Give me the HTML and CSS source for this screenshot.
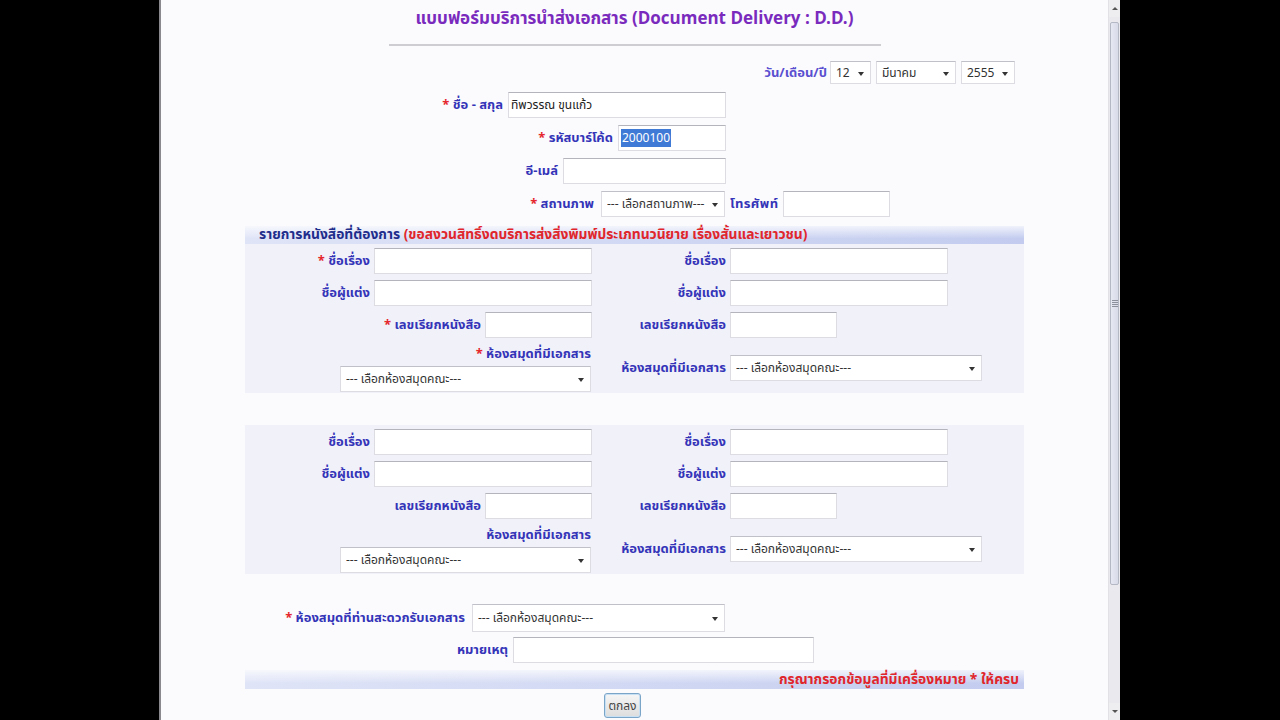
FILE: index.html
```html
<!DOCTYPE html>
<html lang="th">
<head>
<meta charset="utf-8">
<title>แบบฟอร์มบริการนำส่งเอกสาร</title>
<link rel="stylesheet" href="styles.css">
</head>
<body>
<div class="bar-left"></div>
<div class="viewport">
  <div class="page">
    <h1 class="title">แบบฟอร์มบริการนำส่งเอกสาร (Document Delivery : D.D.)</h1>
    <div class="rule"></div>
    <div class="form">
      <div class="date-row">
        <span class="date-label">วัน/เดือน/ปี</span>
        <span class="sel w-day"><select><option>12</option></select></span>
        <span class="sel w-month"><select><option>มีนาคม</option></select></span>
        <span class="sel w-year"><select><option>2555</option></select></span>
      </div>

      <div class="top-row">
        <div class="cell-r"><span class="lbl"><span class="req">*</span> ชื่อ - สกุล</span><span class="input w-name">ทิพวรรณ ขุนแก้ว</span></div>
        <div class="cell-l"></div>
      </div>
      <div class="top-row">
        <div class="cell-r"><span class="lbl"><span class="req">*</span> รหัสบาร์โค้ด</span><span class="input w-code"><span class="hl">2000100</span></span></div>
        <div class="cell-l"></div>
      </div>
      <div class="top-row">
        <div class="cell-r"><span class="lbl">อี-เมล์</span><span class="input w-mail"></span></div>
        <div class="cell-l"></div>
      </div>
      <div class="top-row">
        <div class="cell-r"><span class="lbl"><span class="req">*</span> สถานภาพ</span><span class="sel w-status"><select><option>--- เลือกสถานภาพ---</option></select></span></div>
        <div class="cell-l"><span class="lbl">โทรศัพท์</span><span class="input w-phone"></span></div>
      </div>

      <div class="head-bar"><span class="head-main">รายการหนังสือที่ต้องการ</span> <span class="head-note">(ขอสงวนสิทธิ์งดบริการส่งสิ่งพิมพ์ประเภทนวนิยาย เรื่องสั้นและเยาวชน)</span></div>

      <div class="book">
        <div class="bl"><span class="lbl"><span class="req">*</span> ชื่อเรื่อง</span><span class="input w-long"></span></div>
        <div class="br-lbl lbl">ชื่อเรื่อง</div>
        <div class="br-f"><span class="input w-long"></span></div>

        <div class="bl"><span class="lbl">ชื่อผู้แต่ง</span><span class="input w-long"></span></div>
        <div class="br-lbl lbl">ชื่อผู้แต่ง</div>
        <div class="br-f"><span class="input w-long"></span></div>

        <div class="bl"><span class="lbl"><span class="req">*</span> เลขเรียกหนังสือ</span><span class="input w-short"></span></div>
        <div class="br-lbl lbl">เลขเรียกหนังสือ</div>
        <div class="br-f"><span class="input w-short"></span></div>

        <div class="bl stack"><span class="lbl"><span class="req">*</span> ห้องสมุดที่มีเอกสาร</span><span class="sel w-lib"><select><option>--- เลือกห้องสมุดคณะ---</option></select></span></div>
        <div class="br-lbl lbl">ห้องสมุดที่มีเอกสาร</div>
        <div class="br-f"><span class="sel w-lib2"><select><option>--- เลือกห้องสมุดคณะ---</option></select></span></div>
      </div>

      <div class="book second">
        <div class="bl"><span class="lbl">ชื่อเรื่อง</span><span class="input w-long"></span></div>
        <div class="br-lbl lbl">ชื่อเรื่อง</div>
        <div class="br-f"><span class="input w-long"></span></div>

        <div class="bl"><span class="lbl">ชื่อผู้แต่ง</span><span class="input w-long"></span></div>
        <div class="br-lbl lbl">ชื่อผู้แต่ง</div>
        <div class="br-f"><span class="input w-long"></span></div>

        <div class="bl"><span class="lbl">เลขเรียกหนังสือ</span><span class="input w-short"></span></div>
        <div class="br-lbl lbl">เลขเรียกหนังสือ</div>
        <div class="br-f"><span class="input w-short"></span></div>

        <div class="bl stack"><span class="lbl">ห้องสมุดที่มีเอกสาร</span><span class="sel w-lib"><select><option>--- เลือกห้องสมุดคณะ---</option></select></span></div>
        <div class="br-lbl lbl">ห้องสมุดที่มีเอกสาร</div>
        <div class="br-f"><span class="sel w-lib2"><select><option>--- เลือกห้องสมุดคณะ---</option></select></span></div>
      </div>

      <div class="top-row pickup">
        <div class="cell-r"><span class="lbl"><span class="req">*</span> ห้องสมุดที่ท่านสะดวกรับเอกสาร</span><span class="sel w-pick"><select><option>--- เลือกห้องสมุดคณะ---</option></select></span></div>
        <div class="cell-l"></div>
      </div>
      <div class="remark-row"><span class="lbl">หมายเหตุ</span><span class="input w-remark"></span></div>

      <div class="foot-bar"><span class="foot-note">กรุณากรอกข้อมูลที่มีเครื่องหมาย * ให้ครบ</span></div>
      <div class="btn-row"><button class="btn" type="button">ตกลง</button></div>
    </div>
  </div>
  <div class="scrollbar">
    <div class="arrow up"></div>
    <div class="track"><div class="thumb"><span class="grip"></span></div></div>
    <div class="arrow down"></div>
  </div>
</div>
<div class="bar-right"></div>
</body>
</html>
```
FILE: styles.css
```css
* { box-sizing: border-box; }
html, body { margin: 0; padding: 0; }
body {
  width: 1280px;
  height: 720px;
  overflow: hidden;
  background: #000;
  display: flex;
  font-family: Tahoma, "Noto Sans Thai", "Noto Sans Thai UI", Loma, Garuda, "DejaVu Sans", sans-serif;
  font-size: 13px;
}
.bar-left { width: 159px; flex: none; background: #000; }
.bar-right { flex: 1; background: #000; }
.viewport {
  width: 961px;
  flex: none;
  display: flex;
  background: #fbfbfd;
  border-left: 2px solid #8a8a8e;
}
.page {
  width: 947px;
  flex: none;
  display: flex;
  flex-direction: column;
  align-items: center;
  padding-top: 7px;
}
.title {
  margin: 0;
  font-size: 17px;
  line-height: 24px;
  font-weight: bold;
  color: #7a2bbd;
}
.rule {
  width: 492px;
  margin-top: 13px;
  border-top: 2px solid #cdcdd2;
}
.form {
  width: 779px;
  display: flex;
  flex-direction: column;
}
.date-row {
  display: flex;
  justify-content: flex-end;
  align-items: center;
  gap: 5px;
  padding-right: 9px;
  margin-top: 15px;
  height: 23px;
}
.date-label { color: #5a4fd0; font-weight: bold; margin-right: -2px; }

.lbl { color: #3434b8; font-weight: bold; white-space: nowrap; }
.req { color: #e5262c; }

.input {
  display: inline-block;
  height: 26px;
  line-height: 24px;
  background: #fff;
  border: 1px solid #dcdce2;
  border-top-color: #b4b4bc;
  padding: 0 2px;
  color: #222;
  font-size: 12px;
  white-space: nowrap;
  overflow: hidden;
}
.hl { background: #3f7ad6; color: #fff; padding: 0 1px; }

.sel { position: relative; display: inline-block; height: 26px; }
.sel select {
  -webkit-appearance: none;
  appearance: none;
  width: 100%;
  height: 100%;
  margin: 0;
  font-family: inherit;
  font-size: 12px;
  color: #333;
  background: #fff;
  border: 1px solid #dcdce2;
  border-top-color: #c0c0c8;
  padding: 0 16px 0 5px;
  border-radius: 0;
}
.sel::after {
  content: "";
  position: absolute;
  right: 7px;
  top: 50%;
  margin-top: -1px;
  border-left: 3px solid transparent;
  border-right: 3px solid transparent;
  border-top: 4px solid #333;
  pointer-events: none;
}
.date-row .sel { height: 23px; }
.w-day { width: 41px; }
.w-month { width: 80px; }
.w-year { width: 54px; }
.w-name { width: 218px; }
.w-code { width: 108px; }
.w-mail { width: 163px; }
.w-status { width: 124px; }
.w-phone { width: 107px; }
.w-long { width: 218px; }
.w-short { width: 107px; }
.w-lib { width: 251px; }
.w-lib2 { width: 252px; }
.w-pick { width: 253px; height: 28px; }
.w-remark { width: 301px; }

.top-row {
  display: grid;
  grid-template-columns: 481px 1fr;
  margin-top: 7px;
  align-items: center;
}
.date-row + .top-row { margin-top: 8px; }
.cell-r { display: flex; justify-content: flex-end; align-items: center; gap: 5px; }
.cell-l { display: flex; align-items: center; gap: 5px; padding-left: 4px; }
.cell-r .sel { margin-left: 2px; margin-right: 1px; }
.cell-l .lbl { letter-spacing: 0.4px; }

.head-bar {
  margin-top: 9px;
  height: 18px;
  line-height: 18px;
  padding-left: 14px;
  font-weight: bold;
  font-size: 13.8px;
  background:
    linear-gradient(to bottom, rgba(255,255,255,0.75), rgba(255,255,255,0) 70%),
    linear-gradient(to right, #dfe4f7, #c3ccef);
  white-space: nowrap;
}
.head-main { color: #1f2e8c; }
.head-note { color: #e0262c; }

.book {
  display: grid;
  grid-template-columns: 351px 130px 1fr;
  row-gap: 6px;
  align-items: center;
  background: #f1f1f9;
  padding: 4px 0 1px;
}
.book.second { margin-top: 32px; }
.bl { display: flex; justify-content: flex-end; align-items: center; gap: 4px; padding-right: 4px; }
.bl.stack { flex-direction: column; align-items: flex-end; gap: 2px; padding-right: 5px; }
.br-lbl { text-align: right; }
.br-f { padding-left: 4px; display: flex; align-items: center; }

.top-row.pickup { margin-top: 30px; }
.remark-row {
  display: flex;
  justify-content: center;
  align-items: center;
  gap: 5px;
  margin-top: 5px;
  padding-left: 2px;
}
.foot-bar {
  margin-top: 7px;
  height: 19px;
  line-height: 19px;
  text-align: right;
  padding-right: 5px;
  font-weight: bold;
  font-size: 13.8px;
  background:
    linear-gradient(to bottom, rgba(255,255,255,0.75), rgba(255,255,255,0) 70%),
    linear-gradient(to right, #dfe4f7, #c3ccef);
}
.foot-note { color: #e0262c; }
.btn-row { display: flex; justify-content: center; margin-top: 4px; }
.btn {
  width: 37px;
  height: 25px;
  margin-right: 24px;
  padding: 0;
  font-family: inherit;
  font-size: 12px;
  color: #444;
  background: linear-gradient(to bottom, #f6f6f6, #dddddd);
  border: 1px solid #7aa4c8;
  border-radius: 3px;
  box-shadow: inset 0 0 0 1px #c8e0f4;
}

.scrollbar {
  width: 12px;
  flex: none;
  display: flex;
  flex-direction: column;
  background: #eaeaee;
  border-left: 1px solid #e2e2e6;
}
.arrow { height: 17px; position: relative; background: #eeeef0; }
.arrow::after {
  content: "";
  position: absolute;
  left: 3px;
  top: 7px;
  border-left: 3px solid transparent;
  border-right: 3px solid transparent;
}
.arrow.up::after { border-bottom: 3px solid #555; }
.arrow.down::after { border-top: 3px solid #555; }
.track { flex: 1; padding-top: 5px; }
.thumb {
  height: 563px;
  margin: 0 1px;
  background: linear-gradient(to right, #e6e8f2, #d8dbe8);
  border: 1px solid #b4b7c4;
  border-radius: 2px;
  display: flex;
  align-items: center;
  justify-content: center;
}
.grip {
  width: 6px;
  height: 8px;
  background: repeating-linear-gradient(to bottom, #8c8f9c 0 1px, transparent 1px 2px);
}
```
